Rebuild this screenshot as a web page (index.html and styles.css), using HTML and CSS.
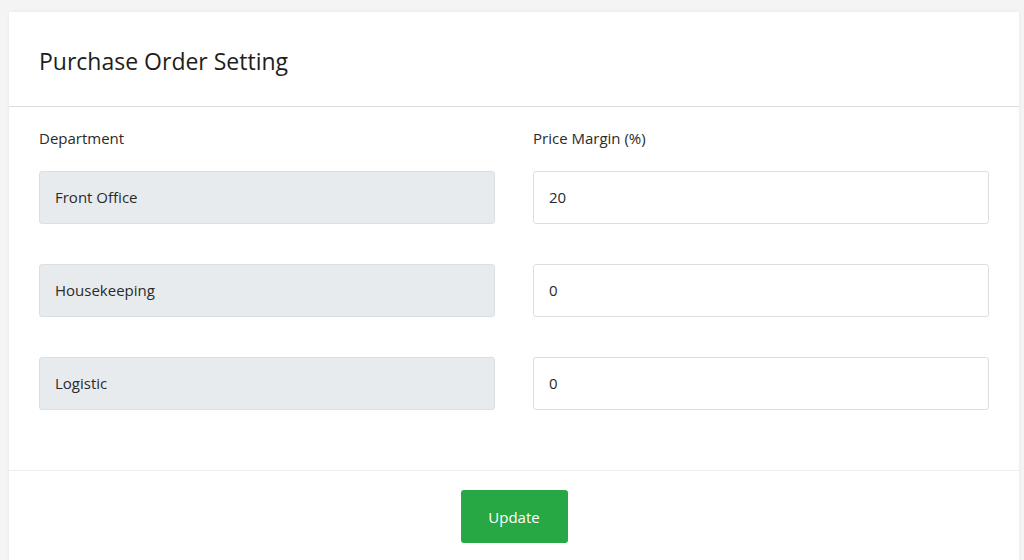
FILE: index.html
```html
<html><head><meta http-equiv="Content-Type" content="text/html; charset=UTF-8">
<title>Purchase Order Setting</title>
<link rel="stylesheet" href="styles.css">
</head>
<body>

  <div class="card">

    <div class="card-head">
      <h3>Purchase Order Setting</h3>
    </div>

    <div class="card-body">
      <div class="grid">
        <label class="capt">Department</label>
        <label class="capt">Price Margin (%)</label>

        <input class="field ro" type="text" value="Front Office" readonly>
        <input class="field" type="text" value="20">

        <input class="field ro" type="text" value="Housekeeping" readonly>
        <input class="field" type="text" value="0">

        <input class="field ro" type="text" value="Logistic" readonly>
        <input class="field" type="text" value="0">
      </div>
    </div>

    <div class="card-foot">
      <button class="btn" type="button">Update</button>
    </div>

  </div>

</body></html>
```

FILE: styles.css
```css
body
{
  font-family : "Open Sans", "Noto Sans", sans-serif;
  font-size : 15px;
  color : #222;
  background : #f4f4f4;
  margin : 0;
  padding : 12px 5px 0 9px;
  overflow : hidden;
}

.card
{
  background : #fff;
  height : 560px;
  box-shadow : 0 0 4px rgba(0, 0, 0, 0.06);
}

.card-head
{
  height : 95px;
  box-sizing : border-box;
  display : flex;
  align-items : center;
  padding : 3px 30px 0;
  border-bottom : 1px solid #dcdcdc;
}

.card-head h3
{
  margin : 0;
  font-size : 23px;
  font-weight : 400;
  color : #1e1e1e;
}

.card-body
{
  padding : 20px 30px 60px;
  border-bottom : 1px solid #efefef;
}

.grid
{
  display : grid;
  grid-template-columns : 1fr 1fr;
  column-gap : 38px;
  row-gap : 40px;
}

.capt
{
  display : block;
  line-height : 22px;
  margin-bottom : -18px;
  color : #2a2a2a;
}

.field
{
  height : 53px;
  box-sizing : border-box;
  width : 100%;
  padding : 0 15px 2px;
  font : inherit;
  color : #2a2a2a;
  background : #fff;
  border : 1px solid #dedede;
  border-radius : 3px;
  outline : none;
}

.field.ro
{
  background : #e8ebee;
  border-color : #dcdfe2;
}

.card-foot
{
  padding-top : 19px;
  text-align : center;
}

.btn
{
  width : 107px;
  height : 53px;
  font : inherit;
  color : #fff;
  background : #28a745;
  border : none;
  border-radius : 3px;
}
```
